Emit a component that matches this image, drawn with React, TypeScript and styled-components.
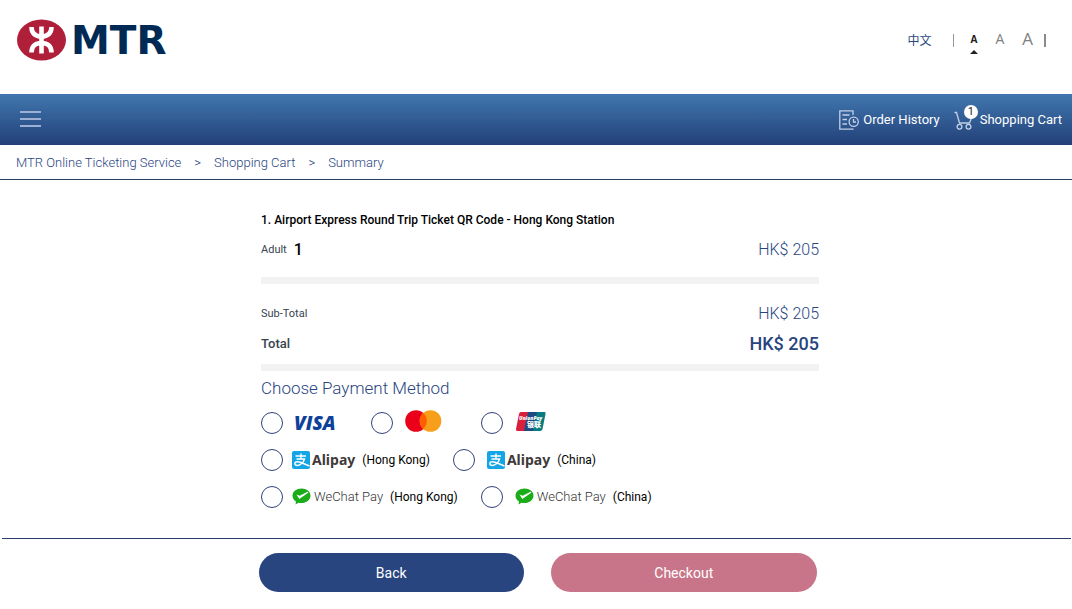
import React from "react";
import styled, { createGlobalStyle } from "styled-components";

const sans = `Roboto, "Liberation Sans", "Noto Sans CJK TC", sans-serif`;
const blue = "#28457f";

const Global = createGlobalStyle`
  * { box-sizing: border-box; }
  body { margin: 0; background: #fff; font-family: ${sans}; font-size: 12px; line-height: 20px; color: #000; }
  h1, h2, p { margin: 0; }
  a { color: inherit; text-decoration: none; }
  button { font-family: inherit; border: 0; padding: 0; background: none; cursor: pointer; }
`;

const Header = styled.header`
  display: flex;
  justify-content: space-between;
  align-items: center;
  height: 94px;
  padding: 0 26px 14px 17px;
`;
const Brand = styled.a`
  display: flex;
  align-items: center;
  gap: 4px;
  color: #002a54;
  font: bold 39px/42px "DejaVu Sans", sans-serif;
`;
const BrandName = styled.span`
  padding-top: 2px;
`;
const Tools = styled.div`
  display: flex;
  align-items: center;
`;
const Lang = styled.a`
  font-family: "Noto Sans CJK TC", sans-serif;
  font-weight: 400;
  color: ${blue};
  margin-right: 22px;
`;
const Divider = styled.span<{ $thick?: boolean }>`
  width: ${(p) => (p.$thick ? 2 : 1)}px;
  height: 13px;
  background: ${(p) => (p.$thick ? "#8a8a8a" : "#999")};
`;
const SizeGroup = styled.div`
  display: flex;
  align-items: center;
  gap: 18px;
  padding: 0 11px 2px 16px;
`;
const SizeButton = styled.button<{ $size: number; $on?: boolean }>`
  position: relative;
  font: ${(p) => (p.$on ? 700 : 400)} ${(p) => p.$size}px/20px "Open Sans", sans-serif;
  color: ${(p) => (p.$on ? "#222" : "#808080")};
  &::after {
    content: "";
    display: ${(p) => (p.$on ? "block" : "none")};
    position: absolute;
    left: 0;
    top: 21px;
    border: 4px solid transparent;
    border-top: 0;
    border-bottom-color: #222;
  }
`;

const NavBar = styled.nav`
  display: flex;
  align-items: center;
  justify-content: space-between;
  height: 51px;
  padding: 0 10px 0 20px;
  background: linear-gradient(#4077ae, #234079);
  color: #fff;
`;
const MenuButton = styled.button`
  display: flex;
  flex-direction: column;
  gap: 5px;
  padding-bottom: 1px;
`;
const MenuLine = styled.span`
  width: 21px;
  height: 2px;
  background: #9db0d3;
`;
const NavLinks = styled.div`
  display: flex;
  gap: 14px;
`;
const NavLink = styled.a`
  display: flex;
  align-items: center;
  gap: 4px;
  font-size: 13px;
  font-weight: 400;
`;
const CartIcon = styled.span`
  position: relative;
  display: flex;
  margin-right: 2px;
`;
const Badge = styled.span`
  position: absolute;
  left: 10px;
  top: -5px;
  width: 14px;
  height: 14px;
  border-radius: 50%;
  background: #fff;
  color: #222;
  font-size: 11px;
  line-height: 14px;
  text-align: center;
`;

const Crumbs = styled.nav`
  display: flex;
  gap: 13px;
  height: 35px;
  padding: 8px 16px 6px;
  border-bottom: 1px solid #24405f;
  font-size: 13px;
  font-weight: 300;
  color: ${blue};
`;

const Main = styled.main`
  max-width: 566px;
  margin: 0 auto;
  padding: 30px 0 23px 8px;
`;
const ItemTitle = styled.h1`
  font-size: 12px;
  font-weight: 500;
  line-height: 20px;
`;
const Row = styled.div`
  display: flex;
  justify-content: space-between;
  align-items: center;
  height: 20px;
  margin-top: 10px;
`;
const Label = styled.span<{ $strong?: boolean }>`
  font-size: ${(p) => (p.$strong ? 13 : 11)}px;
  font-weight: ${(p) => (p.$strong ? 500 : 400)};
  color: #38434f;
`;
const Quantity = styled.span`
  margin-left: 7px;
  font-size: 16px;
  font-weight: 500;
  color: #000;
`;
const Price = styled.span<{ $strong?: boolean }>`
  font-size: ${(p) => (p.$strong ? 18 : 16)}px;
  font-weight: ${(p) => (p.$strong ? 500 : 300)};
  color: ${blue};
`;
const Bar = styled.hr<{ $above: number; $below: number }>`
  height: 7px;
  border: 0;
  background: #f2f2f2;
  margin: ${(p) => p.$above}px 0 ${(p) => p.$below}px;
`;
const Methods = styled.fieldset`
  border: 0;
  margin: 0;
  padding: 0;
`;
const MethodsTitle = styled.legend`
  padding: 0;
  font-size: 17px;
  font-weight: 300;
  line-height: 24px;
  margin-bottom: 4px;
  color: ${blue};
`;
const MethodRow = styled.div`
  display: flex;
  gap: 23px;
  height: 37px;
`;
const Method = styled.label`
  display: flex;
  align-items: center;
  min-width: 87px;
  gap: 9px;
  & + & { gap: 12px; }
`;
const Radio = styled.input`
  appearance: none;
  flex: none;
  width: 22px;
  height: 22px;
  margin: 0;
  border: 1px solid #35427c;
  border-radius: 50%;
  &:checked { background: radial-gradient(${blue} 45%, transparent 50%); }
`;
const PayBrand = styled.span`
  display: flex;
  align-items: center;
`;
const Alipay = styled.span`
  margin-left: 2px;
  font: 700 14px/20px "Noto Sans", sans-serif;
  color: #3f3a3a;
`;
const WeChat = styled.span`
  margin-left: 3px;
  font: 300 13px/20px Roboto, sans-serif;
  color: #333;
`;
const Region = styled.span`
  margin-left: 7px;
  font-size: 12px;
  color: #000;
`;

const Footer = styled.footer`
  margin: 0 1px 0 2px;
  padding: 14px 0 17px;
  border-top: 1px solid #2a3f6b;
`;
const Actions = styled.div`
  display: flex;
  gap: 27px;
  max-width: 560px;
  margin: 0 auto;
  padding-left: 2px;
`;
const Action = styled.button<{ $tone: string }>`
  flex: 1;
  height: 39px;
  border-radius: 20px;
  background: ${(p) => p.$tone};
  color: #fff;
  font-size: 14px;
  font-weight: 400;
`;

const MtrMark = () => (
  <svg width="50" height="42" viewBox="0 0 50 42" aria-hidden="true">
    <ellipse cx="24.5" cy="21" rx="24.5" ry="20.5" fill="#b01f3a" />
    <path d="M24.500 7.500V34.500M14.500 8C14.500 14 18 17.500 24.500 17.500S34.500 14 34.500 8M14.500 33.500C14.500 27.500 18 24 24.500 24S34.500 27.500 34.500 33.500" fill="none" stroke="#fff" strokeWidth="4.600" />
  </svg>
);
const HistoryIcon = () => (
  <svg width="20" height="20" viewBox="0 0 20 20" fill="none" stroke="#c3d0e6" strokeWidth="1.300" aria-hidden="true">
    <path d="M14 5V.800H.800V19.200H14.500M3.500 5H10.500M3.500 9.500H8M3.500 14H8" />
    <circle cx="14.700" cy="11.800" r="4.600" />
    <path d="M14.500 9V12H17" />
  </svg>
);
const Cart = () => (
  <svg width="20" height="20" viewBox="0 0 20 20" fill="none" stroke="#c3d0e6" strokeWidth="1.300" aria-hidden="true">
    <path d="M.500 2.500H2.500L5.500 13H15.500L17.500 8" />
    <circle cx="5.500" cy="16.800" r="2.400" />
    <circle cx="14.500" cy="16.800" r="2.400" />
  </svg>
);
const Visa = () => (
  <svg width="50" height="30" viewBox="0 0 50 30" role="img" aria-label="VISA">
    <text x="2" y="22" fontFamily="Open Sans, sans-serif" fontWeight="800" fontStyle="italic" fontSize="19" fill="#0e419b">VISA</text>
  </svg>
);
const Mastercard = () => (
  <svg width="37" height="25" viewBox="0 0 37 25" role="img" aria-label="Mastercard">
    <circle cx="11" cy="11" r="10.800" fill="#eb001b" />
    <circle cx="25.500" cy="11" r="10.800" fill="#f79e1b" />
    <path d="M18.250 3A10.800 10.800 0 0 1 18.250 19A10.800 10.800 0 0 1 18.250 3Z" fill="#ff5f00" />
  </svg>
);
const UnionPay = () => (
  <svg width="32" height="24" viewBox="0 0 32 24" role="img" aria-label="UnionPay">
    <path d="M6 1H14L10 20H2.500Q.500 20 1 18L4 3Q4.500 1 6 1Z" fill="#d81f3c" />
    <path d="M13 1H23L19 20H9Z" fill="#1d4a80" />
    <path d="M22 1H29.500Q31 1 30.500 3L27.500 18Q27 20 25 20H18Z" fill="#067c80" />
    <text x="4" y="9" fontFamily="Open Sans, sans-serif" fontStyle="italic" fontWeight="800" fontSize="5" fill="#fff">UnionPay</text>
    <text x="12" y="16" fontFamily="Noto Sans CJK SC, sans-serif" fontWeight="900" fontSize="7" fill="#fff">银联</text>
  </svg>
);
const AlipayMark = () => (
  <svg width="18" height="18" viewBox="0 0 18 18" fill="none" stroke="#fff" strokeWidth="1.400" aria-hidden="true">
    <rect width="18" height="18" rx="2" fill="#14a5e6" stroke="none" />
    <path d="M3.500 5H14M9 2.500V7.800M4.500 8H12.500C11.500 11.500 8.500 14.500 5.500 14.500C1.500 14.500 2.300 10.800 5.500 10.800C9 10.800 12 13.200 17.500 15" />
  </svg>
);
const WeChatMark = () => (
  <svg width="19" height="17" viewBox="0 0 19 17" aria-hidden="true">
    <path d="M9.500.500C4.500.500.500 3.600.500 7.700C.500 10.200 1.900 12.200 4 13.500L3.500 16.500L6.500 14.700C13 16 18.500 12.500 18.500 7.700C18.500 3.600 14.500.500 9.500.500Z" fill="#1aad19" />
    <path d="M4.500 6.500L7.300 11L16.500 4.500L15.500 3.700L7.700 7.700Z" fill="#fff" />
  </svg>
);

const Option = ({ id, children }: { id: string; children: React.ReactNode }) => (
  <Method htmlFor={id}>
    <Radio type="radio" name="payment" id={id} />
    <PayBrand>{children}</PayBrand>
  </Method>
);

export default function App() {
  return (
    <>
      <Global />
      <Header>
        <Brand href="#"><MtrMark /><BrandName>MTR</BrandName></Brand>
        <Tools>
          <Lang href="#">中文</Lang>
          <Divider />
          <SizeGroup>
            <SizeButton $size={10} $on>A</SizeButton>
            <SizeButton $size={14}>A</SizeButton>
            <SizeButton $size={17}>A</SizeButton>
          </SizeGroup>
          <Divider $thick />
        </Tools>
      </Header>
      <NavBar>
        <MenuButton aria-label="Menu"><MenuLine /><MenuLine /><MenuLine /></MenuButton>
        <NavLinks>
          <NavLink href="#"><HistoryIcon />Order History</NavLink>
          <NavLink href="#"><CartIcon><Cart /><Badge>1</Badge></CartIcon>Shopping Cart</NavLink>
        </NavLinks>
      </NavBar>
      <Crumbs aria-label="Breadcrumb">
        <a href="#">MTR Online Ticketing Service</a>
        <span>&gt;</span>
        <a href="#">Shopping Cart</a>
        <span>&gt;</span>
        <span>Summary</span>
      </Crumbs>
      <Main>
        <ItemTitle>1. Airport Express Round Trip Ticket QR Code - Hong Kong Station</ItemTitle>
        <Row>
          <PayBrand><Label>Adult</Label><Quantity>1</Quantity></PayBrand>
          <Price>HK$ 205</Price>
        </Row>
        <Bar $above={17} $below={20} />
        <Row><Label>Sub-Total</Label><Price>HK$ 205</Price></Row>
        <Row><Label $strong>Total</Label><Price $strong>HK$ 205</Price></Row>
        <Bar $above={10} $below={5} />
        <Methods>
          <MethodsTitle>Choose Payment Method</MethodsTitle>
          <MethodRow>
            <Option id="visa"><Visa /></Option>
            <Option id="mastercard"><Mastercard /></Option>
            <Option id="unionpay"><UnionPay /></Option>
          </MethodRow>
          <MethodRow>
            <Option id="alipay-hk"><AlipayMark /><Alipay>Alipay</Alipay><Region>(Hong Kong)</Region></Option>
            <Option id="alipay-cn"><AlipayMark /><Alipay>Alipay</Alipay><Region>(China)</Region></Option>
          </MethodRow>
          <MethodRow>
            <Option id="wechat-hk"><WeChatMark /><WeChat>WeChat Pay</WeChat><Region>(Hong Kong)</Region></Option>
            <Option id="wechat-cn"><WeChatMark /><WeChat>WeChat Pay</WeChat><Region>(China)</Region></Option>
          </MethodRow>
        </Methods>
      </Main>
      <Footer>
        <Actions>
          <Action type="button" $tone="#28457f">Back</Action>
          <Action type="button" $tone="#c97589">Checkout</Action>
        </Actions>
      </Footer>
    </>
  );
}
